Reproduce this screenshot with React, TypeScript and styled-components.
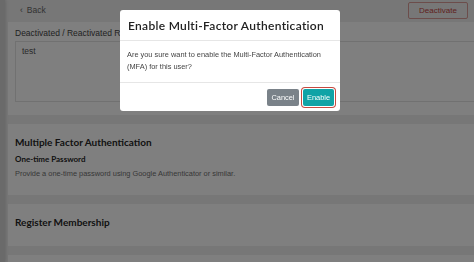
import styled, { createGlobalStyle } from "styled-components";

const GlobalStyle = createGlobalStyle`
  html, body {
    margin: 0;
    padding: 0;
    background: #eeeeee;
    font-family: "Liberation Sans", Arial, sans-serif;
    overflow: hidden;
  }
`;

const Page = styled.div`
  display: flex;
  height: 262px;
  overflow: hidden;
`;

const SideEdge = styled.div`
  width: 5px;
  flex-shrink: 0;
  background: #d4d4d4;
  box-shadow: 1px 0 3px rgba(0, 0, 0, 0.12);
`;

const Main = styled.main`
  flex: 1;
  padding-left: 3px;
  display: flex;
  flex-direction: column;
`;

const TopBar = styled.div`
  height: 22px;
  flex-shrink: 0;
  display: flex;
  align-items: center;
  justify-content: space-between;
  padding: 0 6px 0 12px;
`;

const BackLink = styled.a`
  font-size: 8.5px;
  color: #666;
  display: flex;
  align-items: center;
  gap: 4px;
  margin-top: -3px;
`;

const DeactivateButton = styled.button`
  font-family: inherit;
  font-size: 8px;
  color: #c2453e;
  background: transparent;
  border: 1px solid #d89a96;
  border-radius: 2px;
  width: 60px;
  height: 17px;
  padding: 0;
  margin-top: -2px;
`;

const Card = styled.section<{ $height: number }>`
  background: #ffffff;
  height: ${({ $height }) => $height}px;
  flex-shrink: 0;
  margin-bottom: 9px;
  padding: 0 0 0 7px;
  box-sizing: border-box;
`;

const FieldLabel = styled.div`
  font-size: 8.5px;
  color: #444;
  padding-top: 6px;
  height: 13px;
`;

const TextArea = styled.div`
  border: 1px solid #e2e2e2;
  border-right: none;
  height: 51px;
  padding: 4px 6px;
  font-size: 8.5px;
  color: #555;
`;

const SectionTitle = styled.h2`
  margin: 0;
  padding-top: 12px;
  font-family: Lato, sans-serif;
  font-weight: 700;
  font-size: 10px;
  color: #262626;
`;

const SubTitle = styled.h3`
  margin: 6px 0 0;
  font-family: Lato, sans-serif;
  font-weight: 700;
  font-size: 8px;
  color: #262626;
`;

const Hint = styled.p`
  margin: 5px 0 0;
  font-size: 7.4px;
  color: #707070;
`;

const Overlay = styled.div`
  position: fixed;
  inset: 0;
  background: rgba(0, 0, 0, 0.5);
`;

const Modal = styled.div`
  position: absolute;
  left: 120px;
  top: 10px;
  width: 220px;
  background: #fff;
  border-radius: 3px;
  overflow: hidden;
`;

const ModalHeader = styled.div`
  height: 31px;
  display: flex;
  align-items: center;
  padding: 0 8px;
  border-bottom: 1px solid #e6e6e6;
  box-sizing: border-box;
`;

const ModalTitle = styled.h1`
  margin: 0;
  white-space: nowrap;
  font-family: Lato, sans-serif;
  font-weight: 600;
  font-size: 12px;
  letter-spacing: 0.3px;
  color: #222;
`;

const ModalBody = styled.div`
  height: 42px;
  padding: 8px 7px 0;
  box-sizing: border-box;
  font-size: 7.4px;
  line-height: 12px;
  color: #444;
  border-bottom: 1px solid #e6e6e6;
`;

const ModalFooter = styled.div`
  height: 28px;
  display: flex;
  align-items: center;
  justify-content: flex-end;
  gap: 4px;
  padding-right: 6px;
`;

const ModalButton = styled.button<{ $variant: "cancel" | "confirm" }>`
  font-family: inherit;
  font-size: 7.4px;
  color: #fff;
  border: none;
  border-radius: 2px;
  height: 17px;
  width: ${({ $variant }) => ($variant === "cancel" ? "32px" : "31px")};
  padding: 0;
  background: ${({ $variant }) => ($variant === "cancel" ? "#7a8289" : "#0fa3a6")};
  box-shadow: ${({ $variant }) =>
    $variant === "confirm" ? "0 0 0 1px #fff, 0 0 0 2px #c64a40" : "none"};
`;

export default function App() {
  return (
    <>
      <GlobalStyle />
      <Page>
        <SideEdge />
        <Main>
          <TopBar>
            <BackLink>
              <span>‹</span>
              <span>Back</span>
            </BackLink>
            <DeactivateButton>Deactivate</DeactivateButton>
          </TopBar>
          <Card $height={93}>
            <FieldLabel>Deactivated / Reactivated Reason</FieldLabel>
            <TextArea>test</TextArea>
          </Card>
          <Card $height={71}>
            <SectionTitle>Multiple Factor Authentication</SectionTitle>
            <SubTitle>One-time Password</SubTitle>
            <Hint>Provide a one-time password using Google Authenticator or similar.</Hint>
          </Card>
          <Card $height={42}>
            <SectionTitle>Register Membership</SectionTitle>
          </Card>
          <Card $height={40} />
        </Main>
      </Page>
      <Overlay>
        <Modal>
          <ModalHeader>
            <ModalTitle>Enable Multi-Factor Authentication</ModalTitle>
          </ModalHeader>
          <ModalBody>
            Are you sure want to enable the Multi-Factor Authentication (MFA) for this user?
          </ModalBody>
          <ModalFooter>
            <ModalButton $variant="cancel">Cancel</ModalButton>
            <ModalButton $variant="confirm">Enable</ModalButton>
          </ModalFooter>
        </Modal>
      </Overlay>
    </>
  );
}
